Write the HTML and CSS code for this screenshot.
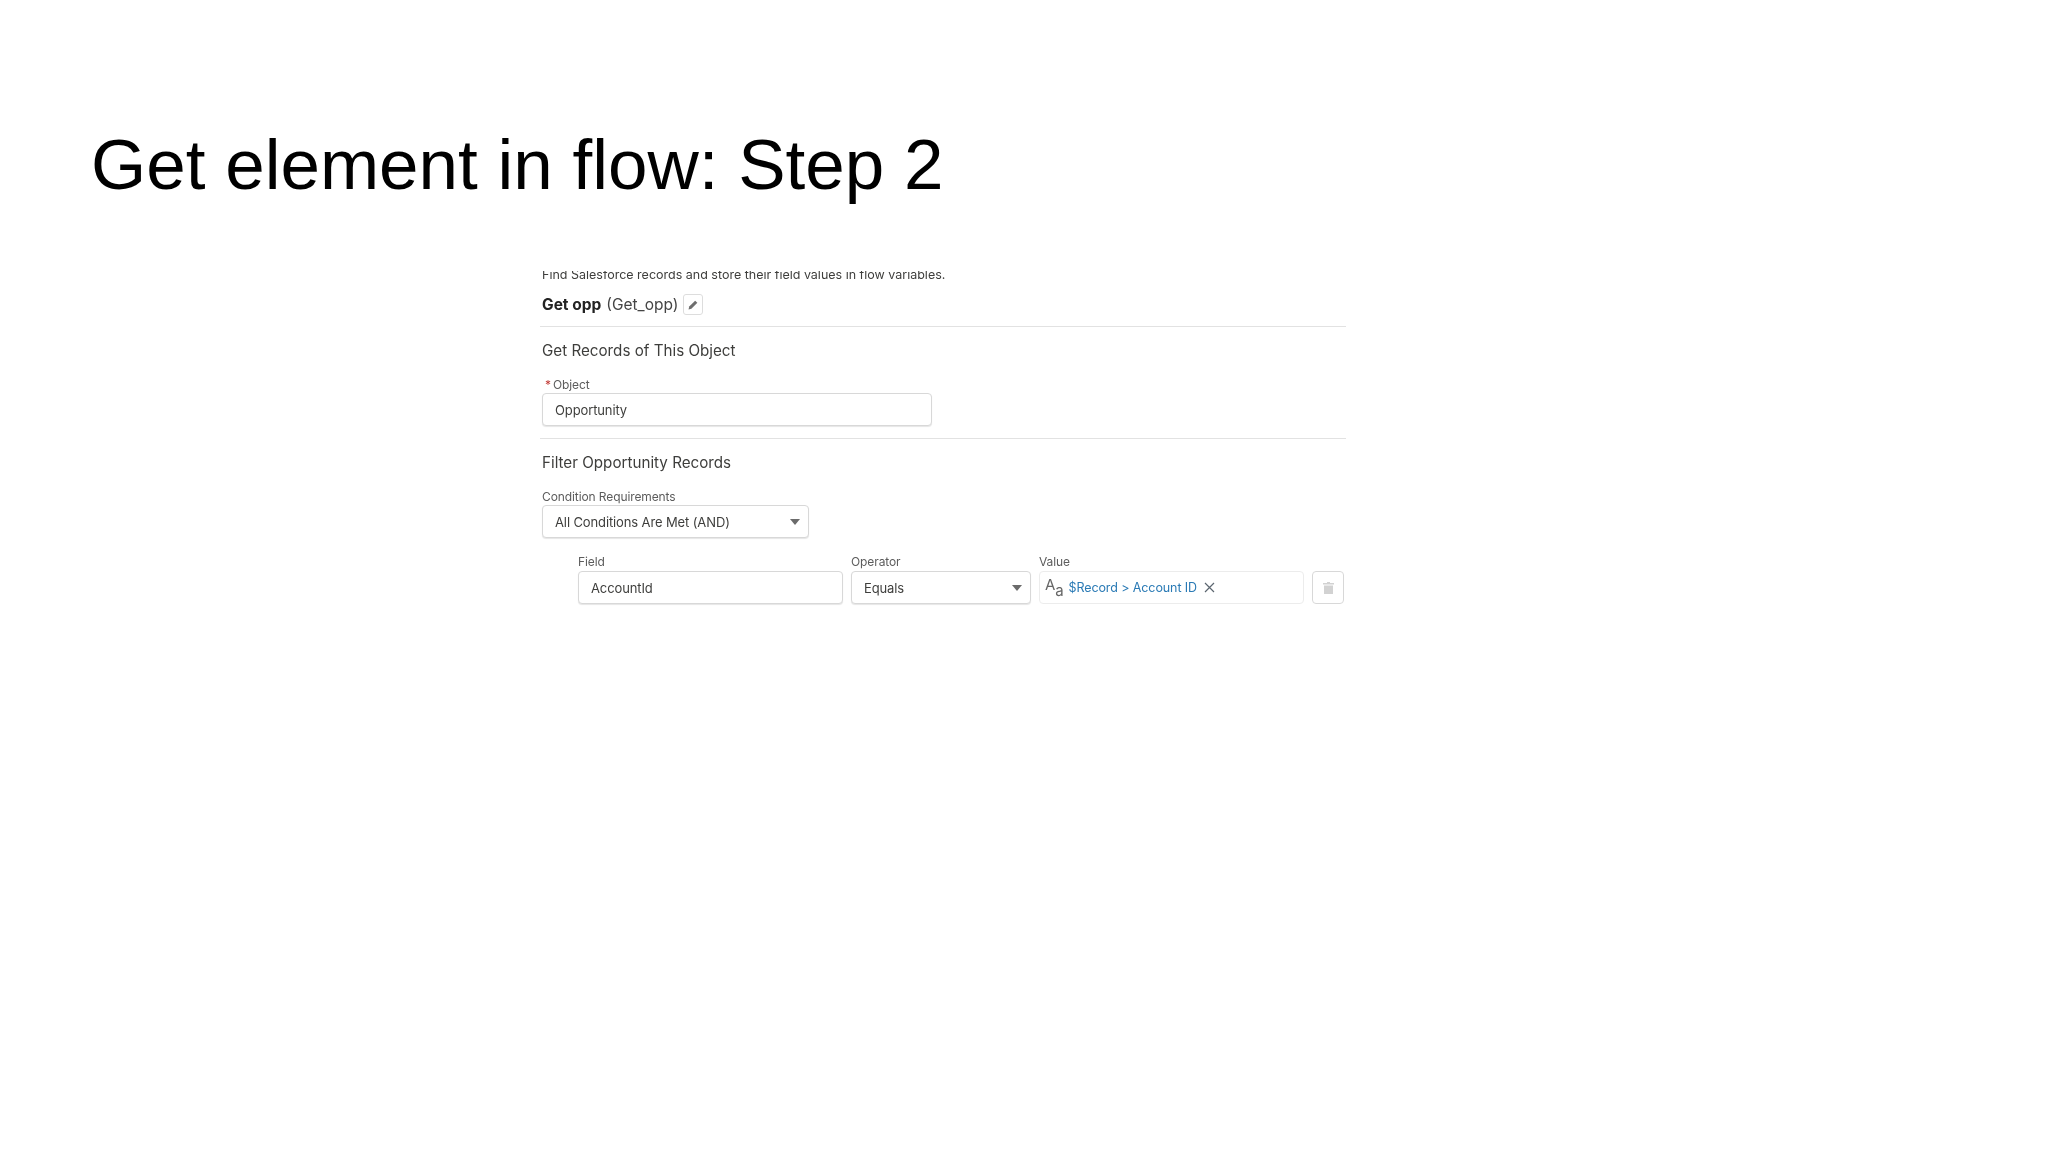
FILE: index.html
```html
<!DOCTYPE html>
<html>
<head>
    <title>Get element in flow: Step 2</title>
    <link rel="stylesheet" href="styles.css">
</head>
<body>
    <h1 class="slide-title">Get element in flow: Step 2</h1>

    <div class="shot">
        <p class="desc">Find Salesforce records and store their field values in flow variables.</p>
        <div class="name-row">
            <b>Get opp</b><span class="api-name">(Get_opp)</span>
            <span class="edit-btn">
                <svg width="11" height="11" viewBox="0 0 10 10"><path d="M0.5 9.5l0.6-2.6 5.4-5.4 2 2-5.4 5.4z" fill="#6e6e6e"/></svg>
            </span>
        </div>

        <div class="section">
            <h2>Get Records of This Object</h2>
            <div class="label label-object"><span class="req">*</span>Object</div>
            <div class="input input-object">Opportunity</div>
        </div>

        <div class="section section-filter">
            <h2>Filter Opportunity Records</h2>
            <div class="label label-cond">Condition Requirements</div>
            <div class="input input-cond">All Conditions Are Met (AND)<i class="caret"></i></div>

            <div class="filter-row">
                <div class="col col-field">
                    <div class="label">Field</div>
                    <div class="input">AccountId</div>
                </div>
                <div class="col col-op">
                    <div class="label">Operator</div>
                    <div class="input">Equals<i class="caret"></i></div>
                </div>
                <div class="col col-value">
                    <div class="label">Value</div>
                    <div class="input value-box">
                        <span class="type-icon">A<sub>a</sub></span>
                        <span class="pill-text">$Record &gt; Account ID</span>
                        <svg class="clear" width="11" height="11" viewBox="0 0 11 11"><path d="M1 1l9 9M10 1l-9 9" stroke="#5c6670" stroke-width="1.2" fill="none"/></svg>
                    </div>
                </div>
                <div class="trash-btn">
                    <svg width="11" height="12" viewBox="0 0 11 12"><path d="M4 0h3v1h4v1.4H0V1h4zM1 3.4h9V12H1z" fill="#d2d2d2"/></svg>
                </div>
            </div>
        </div>
    </div>
</body>
</html>
```

FILE: styles.css
```css
body {
    margin: 0;
    background: #fff;
    font-family: 'Liberation Sans', Arial, sans-serif;
    color: #000;
}

.slide-title {
    margin: 0;
    padding: 123px 0 0 91px;
    font-size: 71px;
    line-height: 83px;
    font-weight: 400;
}

.shot {
    width: 806px;
    height: 337px;
    margin: 65px 0 0 540px;
    overflow: hidden;
    font-family: Inter, 'Liberation Sans', sans-serif;
    color: #3e3e3c;
    filter: blur(0.6px);
}

.desc {
    margin: -3px 0 0;
    padding-left: 2px;
    font-size: 12.5px;
    line-height: 14px;
}

.name-row {
    display: flex;
    align-items: center;
    height: 24px;
    margin-top: 10px;
    padding-left: 2px;
    font-size: 15.5px;
}

.name-row b {
    color: #222;
}

.api-name {
    margin-left: 5px;
    color: #444;
}

.edit-btn {
    display: flex;
    align-items: center;
    justify-content: center;
    box-sizing: border-box;
    width: 20px;
    height: 21px;
    margin-left: 5px;
    border: 1px solid #ddd;
    border-radius: 3px;
}

.section {
    border-top: 1px solid #e2e2e2;
    margin-top: 10px;
    padding-left: 2px;
}

.section-filter {
    margin-top: 12px;
}

.section h2 {
    margin: 13px 0 0;
    font-size: 15.2px;
    line-height: 22px;
    font-weight: 400;
    color: #3e3e3c;
}

.label {
    font-size: 12px;
    line-height: 14px;
    letter-spacing: -0.1px;
    color: #5c5c5c;
}

.label-object {
    margin: 16px 0 1px;
    padding-left: 3px;
}

.label-cond {
    margin: 16px 0 1px;
}

.req {
    color: #c23934;
    margin-right: 2px;
}

.input {
    position: relative;
    display: flex;
    align-items: center;
    box-sizing: border-box;
    height: 33px;
    padding-left: 12px;
    border: 1px solid #d8d8d8;
    border-radius: 4px;
    box-shadow: 0 1px 1px rgba(0,0,0,0.1);
    font-size: 13px;
    letter-spacing: -0.12px;
    color: #3e3e3c;
    background: #fff;
}

.input-object {
    width: 390px;
}

.input-cond {
    width: 267px;
}

.caret {
    position: absolute;
    right: 8px;
    top: 13px;
    border-left: 5px solid transparent;
    border-right: 5px solid transparent;
    border-top: 6px solid #6b6b6b;
}

.filter-row {
    display: flex;
    align-items: flex-end;
    margin: 17px 0 0 36px;
}

.filter-row .label {
    margin-bottom: 2px;
}

.col-field {
    width: 265px;
    margin-right: 8px;
}

.col-op {
    width: 180px;
    margin-right: 8px;
}

.col-value {
    width: 265px;
    margin-right: 8px;
}

.value-box {
    padding-left: 5px;
    border-color: #ececec;
    box-shadow: none;
}

.type-icon {
    font-size: 15px;
    line-height: 14px;
    color: #666;
    margin-top: -6px;
    margin-right: 5px;
}

.type-icon sub {
    font-size: 15px;
    line-height: 0;
    vertical-align: -6px;
}

.pill-text {
    font-size: 12.5px;
    color: #2a7ab5;
    letter-spacing: -0.1px;
}

.clear {
    margin-left: 7px;
}

.trash-btn {
    display: flex;
    align-items: center;
    justify-content: center;
    box-sizing: border-box;
    width: 32px;
    height: 33px;
    border: 1px solid #d8d8d8;
    border-radius: 4px;
}
```
